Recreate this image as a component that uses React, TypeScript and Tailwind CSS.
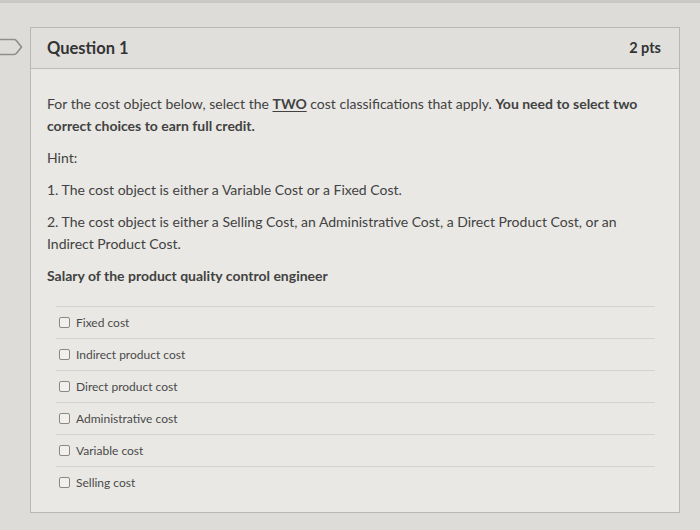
import React from 'react';

const answers = [
  'Fixed cost',
  'Indirect product cost',
  'Direct product cost',
  'Administrative cost',
  'Variable cost',
  'Selling cost',
];

// Canvas-style "flag question" marker, partly off the left edge
const FlagIcon = () => (
  <svg width="24" height="18" viewBox="0 0 24 18" className="block">
    <path
      d="M-4 1.5 H14 Q15.5 1.5 16.5 2.7 L21.5 9 L16.5 15.3 Q15.5 16.5 14 16.5 H-4"
      fill="none"
      stroke="#8f8e8a"
      strokeWidth="1.6"
      strokeLinejoin="round"
    />
  </svg>
);

export default function App() {
  return (
    <div
      className="w-[700px] h-[530px] overflow-hidden bg-[#dddcd8] text-[#424242] border-t-[3px] border-[#c9c8c4]"
      style={{ fontFamily: 'Lato, "Open Sans", "Liberation Sans", sans-serif' }}
    >
      <div className="flex pt-[24px]">
        <div className="w-[30px] pt-[11px] shrink-0">
          <FlagIcon />
        </div>

        <div className="w-[650px] h-[486px] border border-[#b8b7b3] bg-[#e9e8e4] flex flex-col">
          {/* header */}
          <div className="h-[41px] flex items-center justify-between pl-[16px] pr-[18px] bg-[#e0dfdb] border-b border-[#bdbcb8]">
            <h2 className="text-[16.5px] font-bold text-[#333]">Question 1</h2>
            <span className="text-[14.5px] font-bold text-[#333]">2 pts</span>
          </div>

          {/* body */}
          <div className="pl-[16px] pr-[20px] pt-[24px] text-[14px] leading-[22px]">
            <p>
              For the cost object below, select the{' '}
              <span className="font-bold underline underline-offset-2">TWO</span> cost classifications that apply.{' '}
              <span className="font-bold">You need to select two correct choices to earn full credit.</span>
            </p>
            <p className="mt-[10px]">Hint:</p>
            <p className="mt-[10px]">1. The cost object is either a Variable Cost or a Fixed Cost.</p>
            <p className="mt-[10px] pr-[30px]">
              2. The cost object is either a Selling Cost, an Administrative Cost, a Direct Product Cost, or an
              Indirect Product Cost.
            </p>
            <p className="mt-[10px] font-bold">Salary of the product quality control engineer</p>

            <div className="mt-[19px] ml-[9px] mr-[4px]">
              {answers.map((a) => (
                <div key={a} className="h-[32px] border-t border-[#d3d2ce] flex items-center pl-[3px] gap-[6px]">
                  <span className="w-[11px] h-[11px] border border-[#8a8985] rounded-[2px] bg-[#f1f0ec] shrink-0" />
                  <span className="text-[12px] text-[#4a4a4a]">{a}</span>
                </div>
              ))}
            </div>
          </div>
        </div>
      </div>
    </div>
  );
}
